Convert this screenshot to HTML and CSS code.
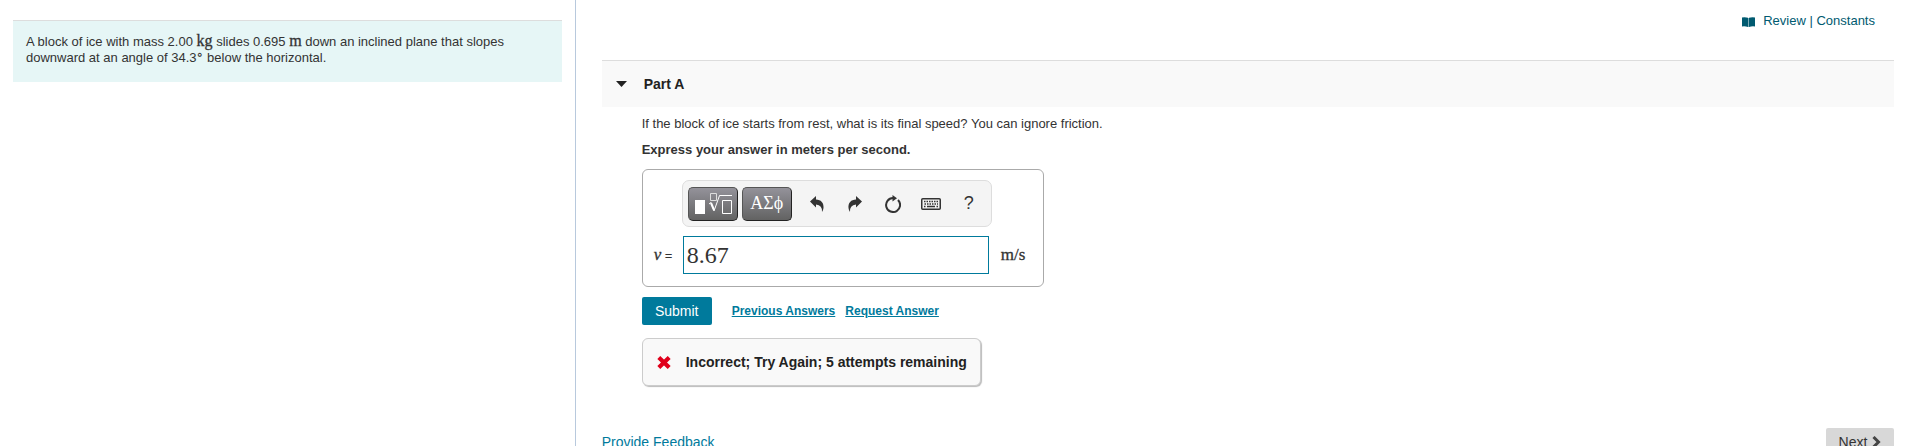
FILE: index.html
```html
<!DOCTYPE html>
<html lang="en">
<head>
    <meta charset="utf-8" />
    <title>Part A</title>
    <link rel="stylesheet" href="styles.css">
</head>
<body>
    <!-- Left Side -->
    <div class="leftPanel">
        <p class="intro">A block of ice with mass 2.00 <span class="unit">kg</span> slides 0.695 <span class="unit">m</span> down an inclined plane that slopes downward at an angle of 34.3<span class="degree">∘</span> below the horizontal.</p>
    </div>

    <!-- Right Side -->
    <div class="rightPanel">
        <div class="topLinks">
            <svg class="book" width="13" height="10" viewBox="0 0 13 10">
                <path fill="#005a70" d="M0 .5Q3 -.3 6 .8V10Q3 9 0 9.500ZM7 .8Q10 -.3 13 .5V9.500Q10 9 7 10Z"/>
                <path fill="#7fadb8" d="M6 1H7V10H6Z"/>
            </svg>
            <a href="#">Review</a>&nbsp;|&nbsp;<a href="#">Constants</a>
        </div>

        <div class="partHeader">
            <svg width="11" height="6" viewBox="0 0 11 6"><path fill="#222" d="M0 0H11L5.500 6Z"/></svg>
            <h2>Part A</h2>
        </div>

        <form class="part">
            <p>If the block of ice starts from rest, what is its final speed? You can ignore friction.</p>
            <p class="instructions">Express your answer in meters per second.</p>

            <!-- Answer box -->
            <div class="answerBox">
                <div class="toolbar">
                    <button type="button" class="dark" aria-label="Templates">
                        <svg width="38" height="24" viewBox="0 0 38 24" fill="none" stroke="#fff">
                            <path fill="#fff" stroke="none" d="M1 8H11V22H1Z"/>
                            <path stroke="#ddd" d="M16.500 1.500H22.500V8.500H16.500Z"/>
                            <path d="M15 12L17 10.500L20 19L25.500 3.500H38"/>
                            <path stroke-width="2" d="M17 11L20 18"/>
                            <path d="M28.500 8.500H37.500V21.500H28.500Z"/>
                        </svg>
                    </button>
                    <button type="button" class="dark">ΑΣϕ</button>
                    <button type="button" class="tool" aria-label="Undo">
                        <svg width="14" height="16" viewBox="0 0 14 16"><path fill="#333" d="M0 5.500L6 0V3.500C11 3.500 14 7 13.500 12Q13.300 14 12 16Q12.500 9 6 8.500V11.500Z"/></svg>
                    </button>
                    <button type="button" class="tool" aria-label="Redo">
                        <svg width="14" height="16" viewBox="0 0 14 16"><path fill="#333" d="M14 5.500L8 0V3.500C3 3.500 0 7 .5 12Q.7 14 2 16Q1.500 9 8 8.500V11.500Z"/></svg>
                    </button>
                    <button type="button" class="tool" aria-label="Reset">
                        <svg width="16" height="18" viewBox="0 0 16 18"><path fill="none" stroke="#333" stroke-width="2" d="M13 5A7 7 0 1 1 8 3"/><path fill="#333" d="M7.500 0L12 3.200L7.500 6.500Z"/></svg>
                    </button>
                    <button type="button" class="tool" aria-label="Keyboard">
                        <svg width="20" height="12" viewBox="0 0 20 12" fill="none" stroke="#333">
                            <rect x=".75" y=".75" width="18.500" height="10.500" rx="1" stroke-width="1.500"/>
                            <path stroke-width="1.500" stroke-dasharray="1.500 1" d="M3 3.500H17.500M3.500 6H17"/>
                            <path stroke-width="1.500" d="M3 8.500H4.500M6 8.500H14M15.500 8.500H17"/>
                        </svg>
                    </button>
                    <button type="button" class="tool help" aria-label="Help">?</button>
                </div>
                <div class="answerRow">
                    <label for="answer"><i>v</i> =</label>
                    <input type="text" id="answer" name="answer" value="8.67">
                    <span class="answerUnit">m/s</span>
                </div>
            </div>

            <div class="actions">
                <button type="button" class="submit">Submit</button>
                <a href="#">Previous Answers</a>
                <a href="#">Request Answer</a>
            </div>

            <div class="feedback">
                <svg width="14" height="13" viewBox="0 0 14 13"><path fill="none" stroke="#e0001b" stroke-width="4.200" d="M1.800 1.500L12.200 11.500M12.200 1.500L1.800 11.500"/></svg>
                <span>Incorrect; Try Again; 5 attempts remaining</span>
            </div>
        </form>

        <!-- Bottom -->
        <div class="bottomBar">
            <a href="#">Provide Feedback</a>
            <button type="button" class="next">Next
                <svg width="9" height="12" viewBox="0 0 9 12"><path fill="none" stroke="#444" stroke-width="3" d="M1.500 1L6.500 6L1.500 11"/></svg>
            </button>
        </div>
    </div>
</body>
</html>
```
FILE: styles.css
```css
html, body {
    height: 100%;
    overflow: hidden;
}

body {
    display: flex;
    margin: 0;
    background: white;
    color: #333;
    font-family: "Liberation Sans", Arial, sans-serif;
    font-size: 13px;
    line-height: 16px;
}

p, h2 {
    margin: 0;
}

a {
    color: #007a9c;
    text-decoration: none;
}

svg {
    flex: none;
}

button {
    padding: 0;
    border: none;
    font-family: inherit;
    font-size: 14px;
}

.leftPanel {
    box-sizing: border-box;
    width: 30%;
    padding: 20px 13px;
    border-right: 1px solid #b8c9dd;
}

.intro {
    padding: 13px 13px 16px;
    border-top: 1px solid #ddd;
    background: #e6f6f6;
}

.unit {
    font-family: "Liberation Serif", serif;
    font-size: 16px;
    line-height: 0;
    -webkit-text-stroke: 0.3px #333;
}

.degree {
    font-family: "DejaVu Serif", serif;
    font-size: 14px;
    line-height: 0;
    vertical-align: 3px;
}

.rightPanel {
    flex: 1;
    padding: 0 25px 0 26px;
}

.topLinks {
    display: flex;
    justify-content: flex-end;
    padding: 13px 19px 31px 0;
    color: #005a70;
}

.topLinks a {
    color: #005a70;
}

.book {
    margin: 4px 8px 0 0;
}

.partHeader {
    display: flex;
    align-items: center;
    gap: 17px;
    height: 46px;
    padding-left: 14px;
    border-top: 1px solid #ddd;
    background: #f9f9f9;
    color: #222;
}

.partHeader h2 {
    font-size: 14px;
}

.part {
    padding: 9px 0 0 40px;
}

.instructions {
    margin: 10px 0 11px;
    font-weight: bold;
}

.answerBox {
    box-sizing: border-box;
    width: 402px;
    padding: 10px 11px 12px;
    border: 1px solid #aaa;
    border-radius: 6px;
}

.toolbar {
    box-sizing: border-box;
    display: flex;
    align-items: center;
    width: 310px;
    height: 47px;
    margin-left: 28px;
    padding-left: 5px;
    border: 1px solid #ddd;
    border-radius: 7px;
    background: #f4f4f4;
}

.dark {
    display: flex;
    align-items: center;
    justify-content: center;
    box-sizing: border-box;
    width: 50px;
    height: 34px;
    margin-right: 4px;
    border: 1px solid #555;
    border-right-color: #222;
    border-bottom-color: #222;
    border-radius: 5px;
    background: linear-gradient(#94929a, #626262);
    color: white;
    font-family: "Liberation Serif", serif;
    font-size: 18px;
}

.tool {
    display: flex;
    align-items: center;
    justify-content: center;
    box-sizing: border-box;
    width: 38px;
    height: 34px;
    padding-left: 4px;
    background: none;
    color: #333;
}

.help {
    font-size: 18px;
}

.answerRow {
    display: flex;
    align-items: center;
    margin-top: 9px;
}

.answerRow label {
    width: 29px;
    font-size: 13px;
}

.answerRow i, .answerUnit {
    font-family: "Liberation Serif", serif;
    font-size: 17px;
    -webkit-text-stroke: 0.3px #333;
}

.answerRow input {
    box-sizing: border-box;
    width: 306px;
    height: 38px;
    padding: 0 3px;
    border: 1px solid #007a9c;
    color: #333;
    font-family: "Liberation Serif", serif;
    font-size: 24px;
}

.answerUnit {
    margin-left: 12px;
}

.actions {
    display: flex;
    align-items: center;
    gap: 10px;
    margin-top: 10px;
}

.actions a {
    font-size: 12px;
    font-weight: bold;
    text-decoration: underline;
}

.submit {
    width: 70px;
    height: 28px;
    margin-right: 10px;
    border-radius: 2px;
    background: #007a9c;
    color: white;
}

.feedback {
    box-sizing: border-box;
    display: flex;
    align-items: center;
    gap: 15px;
    width: fit-content;
    height: 48px;
    margin-top: 13px;
    padding: 0 13px 0 14px;
    border: 1px solid #ccc;
    border-radius: 6px;
    background: #f9f9f9;
    box-shadow: 1px 1px 1px #bbb;
    color: #222;
    font-size: 14px;
    font-weight: bold;
}

.bottomBar {
    display: flex;
    align-items: center;
    justify-content: space-between;
    margin-top: 42px;
    font-size: 14px;
}

.next {
    display: flex;
    align-items: center;
    justify-content: center;
    gap: 5px;
    width: 68px;
    height: 28px;
    border-radius: 2px;
    background: #d8d8d8;
    color: #333;
}
```
